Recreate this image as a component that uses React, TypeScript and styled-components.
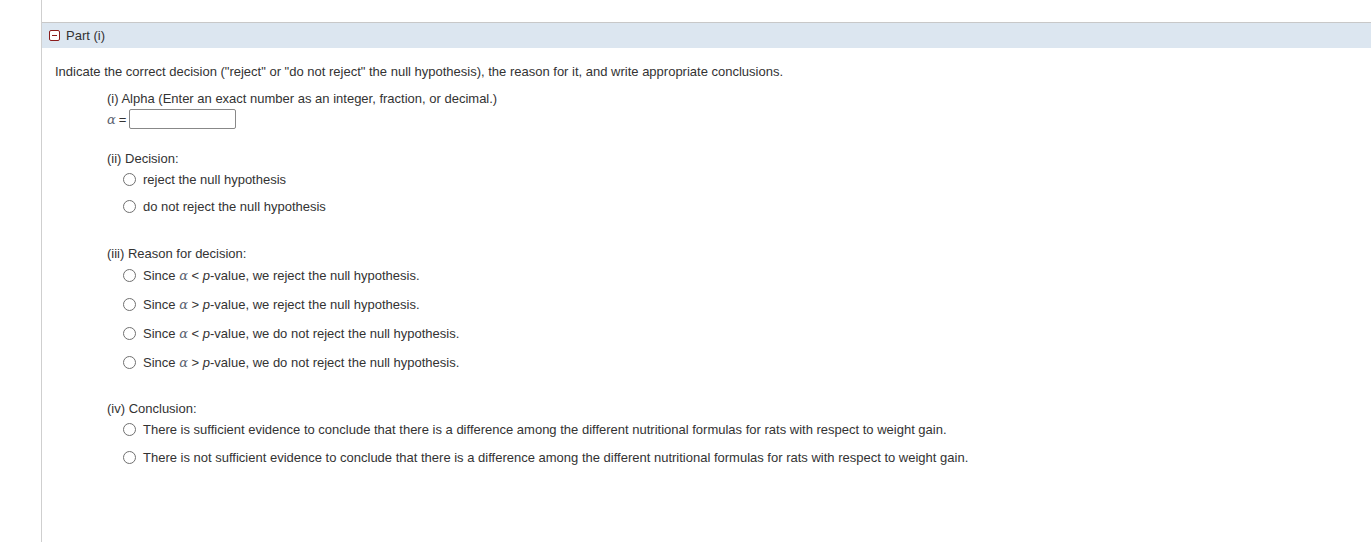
import React from "react";
import styled, { createGlobalStyle } from "styled-components";

const Global = createGlobalStyle`
  html, body { margin: 0; padding: 0; background: #fff; }
  body { font-family: Arial, "Liberation Sans", sans-serif; font-size: 13px; color: #333; }
`;

const Page = styled.div`
  margin-left: 41px;
  border-left: 1px solid #cfcfcf;
  min-height: 542px;
  padding-top: 22px;
  box-sizing: border-box;
`;

const Header = styled.div`
  display: flex;
  align-items: center;
  gap: 6px;
  height: 25px;
  border-top: 1px solid #c8c8c8;
  background: #dce6f0;
  padding-left: 7px;
  font-size: 13px;
  color: #333;
`;

const Toggle = styled.span`
  width: 9px;
  height: 9px;
  border: 1px solid #8b1c1c;
  border-radius: 2px;
  display: inline-flex;
  align-items: center;
  justify-content: center;
  background: #fff;
  &::after {
    content: "";
    width: 5px;
    height: 1px;
    background: #8b1c1c;
  }
`;

const Body = styled.div`
  padding: 16px 0 0 13px;
`;

const Intro = styled.div`
  line-height: 15px;
`;

const Question = styled.div<{ $top: number }>`
  margin-left: 52px;
  margin-top: ${(p) => p.$top}px;
`;

const Label = styled.div`
  line-height: 15px;
`;

const InputRow = styled.div`
  display: flex;
  align-items: center;
  gap: 3px;
  margin-top: 3px;
  height: 20px;
`;

const Alpha = styled.span`
  font-family: "DejaVu Serif", "Liberation Serif", serif;
  font-style: italic;
  font-size: 13px;
  color: #5a6270;
`;

const Box = styled.span`
  display: inline-block;
  width: 105px;
  height: 18px;
  border: 1px solid #888;
  border-radius: 2px;
  background: #fff;
`;

const Options = styled.div<{ $gap: number; $top: number }>`
  display: flex;
  flex-direction: column;
  gap: ${(p) => p.$gap}px;
  margin-top: ${(p) => p.$top}px;
  padding-left: 16px;
`;

const Option = styled.label`
  display: flex;
  align-items: center;
  gap: 7px;
  line-height: 15px;
`;

const Radio = styled.span`
  width: 11px;
  height: 11px;
  border: 1px solid #707070;
  border-radius: 50%;
  background: #fff;
  flex: none;
`;

const Var = styled.span`
  font-family: "DejaVu Serif", "Liberation Serif", serif;
  font-style: italic;
  color: #5a6270;
  font-size: 13px;
`;

const PVal = styled.i`
  font-style: italic;
`;

const Since = ({ op, action }: { op: string; action: string }) => (
  <span>
    Since <Var>α</Var> {op} <PVal>p</PVal>-value, we {action} the null hypothesis.
  </span>
);

export default function App() {
  return (
    <>
      <Global />
      <Page>
        <Header>
          <Toggle />
          <span>Part (i)</span>
        </Header>
        <Body>
          <Intro>
            Indicate the correct decision ("reject" or "do not reject" the null hypothesis), the reason for it, and write appropriate conclusions.
          </Intro>
          <Question $top={12}>
            <Label>(i) Alpha (Enter an exact number as an integer, fraction, or decimal.)</Label>
            <InputRow>
              <Alpha>α</Alpha>
              <span>=</span>
              <Box />
            </InputRow>
          </Question>
          <Question $top={22}>
            <Label>(ii) Decision:</Label>
            <Options $gap={12} $top={6}>
              <Option><Radio />reject the null hypothesis</Option>
              <Option><Radio />do not reject the null hypothesis</Option>
            </Options>
          </Question>
          <Question $top={32}>
            <Label>(iii) Reason for decision:</Label>
            <Options $gap={14} $top={7}>
              <Option><Radio /><Since op="<" action="reject" /></Option>
              <Option><Radio /><Since op=">" action="reject" /></Option>
              <Option><Radio /><Since op="<" action="do not reject" /></Option>
              <Option><Radio /><Since op=">" action="do not reject" /></Option>
            </Options>
          </Question>
          <Question $top={31}>
            <Label>(iv) Conclusion:</Label>
            <Options $gap={13} $top={6}>
              <Option><Radio />There is sufficient evidence to conclude that there is a difference among the different nutritional formulas for rats with respect to weight gain.</Option>
              <Option><Radio />There is not sufficient evidence to conclude that there is a difference among the different nutritional formulas for rats with respect to weight gain.</Option>
            </Options>
          </Question>
        </Body>
      </Page>
    </>
  );
}
